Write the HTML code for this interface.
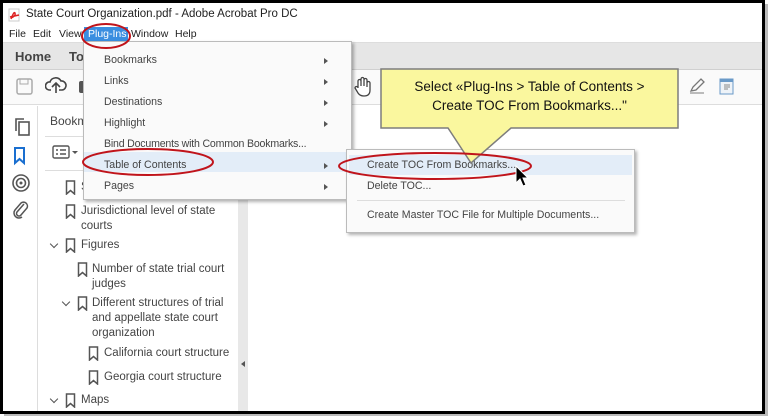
<!DOCTYPE html>
<html><head><meta charset="utf-8"><style>
*{margin:0;padding:0;box-sizing:border-box}
body{width:768px;height:416px;background:#fff;position:relative;overflow:hidden;font-family:"Liberation Sans","DejaVu Sans",sans-serif;color:#333}
.a{position:absolute}
.t{font-size:11px;white-space:nowrap}
.mi{position:absolute;left:20px;font-size:10.6px;color:#444;white-space:nowrap}
.arr{position:absolute;width:0;height:0;border-left:4px solid #555;border-top:3px solid transparent;border-bottom:3px solid transparent}
.chev{position:absolute;width:6px;height:6px;border-right:1.3px solid #555;border-bottom:1.3px solid #555;transform:rotate(45deg)}
.bt{position:absolute;font-size:11.5px;color:#444;line-height:15px}
svg.b{position:absolute;width:11px;height:15px}
</style></head><body>
<div class="a" style="left:4px;top:4px;width:764px;height:412px;background:#bbb"></div>
<div class="a" style="left:0;top:0;width:765px;height:414px;border:3px solid #000;background:#fff;overflow:hidden">
 <svg class="a" style="left:5px;top:5px" width="14" height="14"><rect x="1" y="1" width="10" height="12" fill="#fff" stroke="#ccc"/><path d="M3,11 Q6,3 7,5 Q8,8 3,10 M2,9 L11,7" stroke="#d22" stroke-width="1.5" fill="none"/></svg>
 <div class="a t" style="left:23px;top:5px;font-size:11.5px;color:#222">State Court Organization.pdf - Adobe Acrobat Pro DC</div>
 <div class="a t" style="left:6px;top:25px;color:#222;font-size:10.5px">File</div>
 <div class="a t" style="left:30px;top:25px;color:#222;font-size:10.5px">Edit</div>
 <div class="a t" style="left:56px;top:25px;color:#222;font-size:10.5px">View</div>
 <div class="a" style="left:81px;top:24px;width:44px;height:15px;background:#3a8ee0"></div>
 <div class="a t" style="left:85px;top:25px;color:#fff;font-size:10.5px">Plug-Ins</div>
 <div class="a t" style="left:128px;top:25px;color:#222;font-size:10.5px">Window</div>
 <div class="a t" style="left:172px;top:25px;color:#222;font-size:10.5px">Help</div>
 <div class="a" style="left:0;top:39px;width:762px;height:28px;background:#e6e6e6;border-top:1px solid #ddd;border-bottom:1px solid #d0d0d0"></div>
 <div class="a" style="left:12px;top:46px;font-size:13px;font-weight:bold;color:#444">Home</div>
 <div class="a" style="left:66px;top:46px;font-size:13px;font-weight:bold;color:#444">Too</div>
 <div class="a" style="left:0;top:67px;width:762px;height:35px;background:#fafafa;border-bottom:1px solid #ddd"></div>
 <svg class="a" style="left:12px;top:74px" width="20" height="20"><rect x="2" y="2" width="15" height="15" rx="2" fill="none" stroke="#aaa" stroke-width="1.5"/><rect x="5" y="2" width="8" height="5" fill="none" stroke="#aaa"/></svg>
 <svg class="a" style="left:42px;top:72px" width="22" height="22"><path d="M6,15 H4 A4,4 0 0 1 5,7 A6,6 0 0 1 16,6 A4,4 0 0 1 17,15 H14 M11,18 V9 M7,12 L11,8 L15,12" fill="none" stroke="#444" stroke-width="1.6"/></svg>
 <div class="a" style="left:76px;top:78px;width:6px;height:12px;background:#555;border-radius:2px"></div>
 <svg class="a" style="left:349px;top:73px" width="22" height="22"><path d="M6,12 V5 A1.5,1.5 0 0 1 9,5 V10 V3 A1.5,1.5 0 0 1 12,3 V10 V4 A1.5,1.5 0 0 1 15,4 V11 V7 A1.5,1.5 0 0 1 18,7 V14 Q18,20 12,20 Q8,20 6,17 L3,12 A1.5,1.5 0 0 1 6,12" fill="#fff" stroke="#444" stroke-width="1.3"/></svg>
 <svg class="a" style="left:685px;top:74px" width="18" height="18"><path d="M3,14 L5,10 L13,2 L16,5 L8,13 Z" fill="none" stroke="#777" stroke-width="1.3"/><path d="M2,16 H16" stroke="#bbb" stroke-width="2"/></svg>
 <svg class="a" style="left:715px;top:74px" width="18" height="18"><rect x="2" y="2" width="13" height="15" fill="#eef3f8" stroke="#6a9ac8"/><rect x="2" y="2" width="13" height="3" fill="#6a9ac8"/><path d="M6,8 H12 M6,10 H12 M6,12 H10" stroke="#888"/></svg>
 <div class="a" style="left:34px;top:103px;width:1px;height:310px;background:#ddd"></div>
 <svg class="a" style="left:8px;top:113px" width="22" height="22"><path d="M5,15 V3 H13" fill="none" stroke="#555" stroke-width="1.6"/><rect x="8" y="6" width="10" height="13" fill="#fff" stroke="#555" stroke-width="1.6"/></svg>
 <svg class="a" style="left:10px;top:143px" width="14" height="20"><path d="M2,2 H11 V17 L6.5,13 L2,17 Z" fill="none" stroke="#1a6fd0" stroke-width="2"/></svg>
 <svg class="a" style="left:7px;top:169px" width="22" height="22"><circle cx="11" cy="11" r="8" fill="none" stroke="#555" stroke-width="1.6"/><circle cx="11" cy="11" r="4.5" fill="none" stroke="#555" stroke-width="1.6"/><circle cx="11" cy="11" r="1.5" fill="#555"/></svg>
 <svg class="a" style="left:7px;top:196px" width="22" height="22"><path d="M14,5 L7,13 A2.5,2.5 0 0 0 11,16 L17,9 A4,4 0 0 0 11,4 L5,11 A5,5 0 0 0 12,18" fill="none" stroke="#555" stroke-width="1.5"/></svg>
 <div class="a" style="left:47px;top:111px;font-size:12px;color:#444">Bookm</div>
 <div class="a" style="left:42px;top:133px;width:195px;height:1px;background:#ddd"></div>
 <svg class="a" style="left:49px;top:142px" width="28" height="16"><rect x="1" y="1" width="16" height="12" rx="1.5" fill="none" stroke="#555" stroke-width="1.4"/><path d="M4,5 H6 M8,5 H14 M4,9 H6 M8,9 H14" stroke="#555" stroke-width="1.4"/><path d="M20,6 L26,6 L23,9 Z" fill="#555"/></svg>
 <div class="a" style="left:42px;top:167px;width:195px;height:1px;background:#ddd"></div>
 <svg class="b" style="left:62px;top:177px"><path d="M1.5,1 H9.5 V14 L5.5,10.5 L1.5,14 Z" fill="none" stroke="#555" stroke-width="1.5"/></svg>
 <div class="a bt" style="left:78px;top:177px">S</div>
 <svg class="b" style="left:62px;top:201px"><path d="M1.5,1 H9.5 V14 L5.5,10.5 L1.5,14 Z" fill="none" stroke="#555" stroke-width="1.5"/></svg>
 <div class="bt" style="left:78px;top:201px">Jurisdictional level of state<br>courts</div>
 <div class="chev" style="left:48px;top:238px"></div>
 <svg class="b" style="left:62px;top:235px"><path d="M1.5,1 H9.5 V14 L5.5,10.5 L1.5,14 Z" fill="none" stroke="#555" stroke-width="1.5"/></svg>
 <div class="bt" style="left:78px;top:235px">Figures</div>
 <svg class="b" style="left:74px;top:259px"><path d="M1.5,1 H9.5 V14 L5.5,10.5 L1.5,14 Z" fill="none" stroke="#555" stroke-width="1.5"/></svg>
 <div class="bt" style="left:89px;top:259px">Number of state trial court<br>judges</div>
 <div class="chev" style="left:60px;top:296px"></div>
 <svg class="b" style="left:74px;top:293px"><path d="M1.5,1 H9.5 V14 L5.5,10.5 L1.5,14 Z" fill="none" stroke="#555" stroke-width="1.5"/></svg>
 <div class="bt" style="left:89px;top:293px">Different structures of trial<br>and appellate state court<br>organization</div>
 <svg class="b" style="left:85px;top:343px"><path d="M1.5,1 H9.5 V14 L5.5,10.5 L1.5,14 Z" fill="none" stroke="#555" stroke-width="1.5"/></svg>
 <div class="bt" style="left:101px;top:343px">California court structure</div>
 <svg class="b" style="left:85px;top:367px"><path d="M1.5,1 H9.5 V14 L5.5,10.5 L1.5,14 Z" fill="none" stroke="#555" stroke-width="1.5"/></svg>
 <div class="bt" style="left:101px;top:367px">Georgia court structure</div>
 <div class="chev" style="left:48px;top:393px"></div>
 <svg class="b" style="left:62px;top:390px"><path d="M1.5,1 H9.5 V14 L5.5,10.5 L1.5,14 Z" fill="none" stroke="#555" stroke-width="1.5"/></svg>
 <div class="bt" style="left:78px;top:390px">Maps</div>
 <div class="a" style="left:235px;top:103px;width:10px;height:310px;background:#e8e8e8"></div>
 <div class="a" style="left:238px;top:358px;border-right:4px solid #555;border-top:3px solid transparent;border-bottom:3px solid transparent"></div>
 <div class="a" style="left:80px;top:38px;width:269px;height:159px;background:#fafafa;border:1px solid #bbb;box-shadow:2px 2px 3px rgba(0,0,0,.3)">
  <div class="a" style="left:0;top:110px;width:267px;height:20px;background:#e3edf8"></div>
  <div class="mi" style="top:12px">Bookmarks</div><div class="arr" style="left:240px;top:16px"></div>
  <div class="mi" style="top:33px">Links</div><div class="arr" style="left:240px;top:37px"></div>
  <div class="mi" style="top:54px">Destinations</div><div class="arr" style="left:240px;top:58px"></div>
  <div class="mi" style="top:75px">Highlight</div><div class="arr" style="left:240px;top:79px"></div>
  <div class="mi" style="top:96px;letter-spacing:-0.2px">Bind Documents with Common Bookmarks...</div>
  <div class="mi" style="top:117px">Table of Contents</div><div class="arr" style="left:240px;top:121px"></div>
  <div class="mi" style="top:138px">Pages</div><div class="arr" style="left:240px;top:142px"></div>
 </div>
 <div class="a" style="left:343px;top:146px;width:289px;height:84px;background:#fafafa;border:1px solid #bbb;box-shadow:2px 2px 3px rgba(0,0,0,.3)">
  <div class="a" style="left:2px;top:5px;width:283px;height:20px;background:#e3edf8"></div>
  <div class="mi" style="top:9px">Create TOC From Bookmarks...</div>
  <div class="mi" style="top:30px">Delete TOC...</div>
  <div class="a" style="left:10px;top:50px;width:268px;height:1px;background:#ddd"></div>
  <div class="mi" style="top:59px">Create Master TOC File for Multiple Documents...</div>
 </div>
 <svg class="a" style="left:0;top:0" width="762" height="410">
  <polygon points="378,66 675,66 675,125 508,125 468,160 445,125 378,125" fill="#faf79e" stroke="#7d7d7d" stroke-width="1.5"/>
  <ellipse cx="103" cy="33" rx="24" ry="12" fill="none" stroke="#c0141b" stroke-width="2"/>
  <ellipse cx="145" cy="159" rx="65" ry="13" fill="none" stroke="#c0141b" stroke-width="2"/>
  <ellipse cx="432" cy="163" rx="96" ry="13" fill="none" stroke="#c0141b" stroke-width="2"/>
  <path d="M513,163 L513,180 L517,176 L520,183 L523,182 L520,175 L525,175 Z" fill="#000" stroke="#fff" stroke-width="1"/>
 </svg>
 <div class="a" style="left:378px;top:74px;width:297px;text-align:center;font-size:13.5px;line-height:19px;color:#111">Select «Plug-Ins &gt; Table of Contents &gt;<br>Create TOC From Bookmarks..."</div>
</div>
</body></html>
